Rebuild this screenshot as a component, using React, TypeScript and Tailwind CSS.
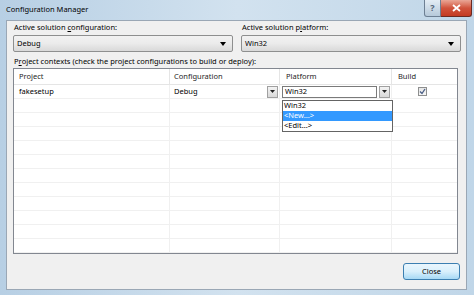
import React from 'react'

const FONT = { fontFamily: '"Noto Sans", "Open Sans", sans-serif' }

function Combo({ value }: { value: string }) {
  return (
    <div className="flex h-[17px] items-center rounded-[2px] border border-[#8e8f8f] bg-gradient-to-b from-[#f2f2f2] via-[#ebebeb] to-[#d9d9d9] pl-[3px] pr-[6px]">
      <span className="flex-1 leading-none text-black">{value}</span>
      <svg width="6" height="4" viewBox="0 0 6 4">
        <path d="M0 0 H6 L3 4 Z" fill="#000" />
      </svg>
    </div>
  )
}

function DropBtn() {
  return (
    <div className="flex h-[12px] w-[11px] items-center justify-center border border-[#a0a0a0] bg-gradient-to-b from-[#f4f4f4] to-[#d8d8d8]">
      <svg width="5" height="3" viewBox="0 0 5 3">
        <path d="M0 0 H5 L2.5 3 Z" fill="#222" />
      </svg>
    </div>
  )
}

export default function App() {
  const rows = Array.from({ length: 11 })
  return (
    <div
      className="flex h-[295px] w-[474px] flex-col overflow-hidden bg-gradient-to-r from-[#b7cfe4] via-[#d2e2ef] to-[#c0d6e8] text-[7.5px]"
      style={FONT}
    >
      {/* title bar */}
      <div className="relative flex h-[20px] items-center pl-[6px]">
        <span className="text-[7.5px] text-black">Configuration Manager</span>
        <div className="absolute right-[2px] top-0 flex">
          <div className="flex h-[17px] w-[17px] items-center justify-center rounded-bl-[3px] border border-t-0 border-[#6d7f93] bg-gradient-to-b from-[#e3ecf4] to-[#b6c9da] text-[9px] font-bold text-[#55667a]">
            ?
          </div>
          <div className="flex h-[17px] w-[31px] items-center justify-center rounded-br-[3px] border border-l-0 border-t-0 border-[#6b2a22] bg-gradient-to-b from-[#e9a696] via-[#d0533c] to-[#c33a22]">
            <svg width="9" height="8" viewBox="0 0 9 8">
              <path d="M1 1 L8 7 M8 1 L1 7" stroke="#fff" strokeWidth="1.8" />
            </svg>
          </div>
        </div>
      </div>

      {/* client */}
      <div className="ml-[6px] mr-[7px] mb-[5px] flex flex-1 flex-col border border-[#9aa7b5] bg-[#f0f0f0] pl-[6px] pr-[5px] text-black">
        <div className="flex gap-[8px]">
          <div className="flex w-[220px] flex-col">
            <div className="flex h-[14px] items-center pl-px">
              Active solution&nbsp;<span className="underline">c</span>onfiguration:
            </div>
            <Combo value="Debug" />
          </div>
          <div className="flex flex-1 flex-col">
            <div className="flex h-[14px] items-center pl-px">
              Active solution p<span className="underline">l</span>atform:
            </div>
            <Combo value="Win32" />
          </div>
        </div>

        <div className="mt-[4px] flex h-[12px] items-center pl-px">
          P<span className="underline">r</span>oject contexts (check the project configurations to build or deploy):
        </div>

        {/* grid */}
        <div className="relative h-[186px] w-[445px] border border-[#828790] bg-white">
          <div className="grid h-[16px] grid-cols-[156px_110px_112px_1fr] border-b border-[#e5e5e5] text-[#1e1e1e]">
            <div className="flex items-center border-r border-[#e5e5e5] pl-[5px]">Project</div>
            <div className="flex items-center border-r border-[#e5e5e5] pl-[4px]">Configuration</div>
            <div className="flex items-center border-r border-[#e5e5e5] pl-[6px]">Platform</div>
            <div className="flex items-center pl-[6px]">Build</div>
          </div>
          <div className="grid h-[14px] grid-cols-[156px_110px_112px_1fr] border-b border-[#f0f0f0]">
            <div className="flex items-center border-r border-[#f0f0f0] pl-[5px]">fakesetup</div>
            <div className="flex items-center border-r border-[#f0f0f0] pl-[4px] pr-px">
              <span className="flex-1">Debug</span>
              <DropBtn />
            </div>
            <div className="flex items-center gap-[2px] border-r border-[#f0f0f0] pl-[2px]">
              <div className="flex h-[12px] w-[95px] items-center border border-[#7a7a7a] pl-[2px]">Win32</div>
              <DropBtn />
            </div>
            <div className="flex items-center justify-center pr-[4px]">
              <div className="flex h-[9px] w-[9px] items-center justify-center border border-[#8e8f8f] bg-gradient-to-b from-[#e6e6e6] to-[#f8f8f8]">
                <svg width="7" height="7" viewBox="0 0 7 7">
                  <path d="M1 3.5 L3 5.5 L6 1" stroke="#4a5f86" strokeWidth="1.3" fill="none" />
                </svg>
              </div>
            </div>
          </div>
          {rows.map((_, i) => (
            <div key={i} className="grid h-[14px] grid-cols-[156px_110px_112px_1fr] border-b border-[#f0f0f0]">
              <div className="border-r border-[#f0f0f0]" />
              <div className="border-r border-[#f0f0f0]" />
              <div className="border-r border-[#f0f0f0]" />
              <div />
            </div>
          ))}

          {/* dropdown list */}
          <div className="absolute left-[268px] top-[31px] flex w-[111px] flex-col border border-[#646464] bg-white">
            <div className="flex h-[10px] items-center pl-[1px] leading-none">Win32</div>
            <div className="flex h-[10px] items-center bg-[#3399ff] pl-[1px] leading-none text-white">&lt;New...&gt;</div>
            <div className="flex h-[10px] items-center pl-[1px] leading-none">&lt;Edit...&gt;</div>
          </div>
        </div>

        <div className="mt-[9px] flex justify-end pr-[1px]">
          <div className="flex h-[17px] w-[57px] items-center justify-center rounded-[3px] border border-[#3c7fb1] bg-gradient-to-b from-[#eaf6fd] via-[#d9f0fc] to-[#a7d9f5]">
            Close
          </div>
        </div>
      </div>
    </div>
  )
}
